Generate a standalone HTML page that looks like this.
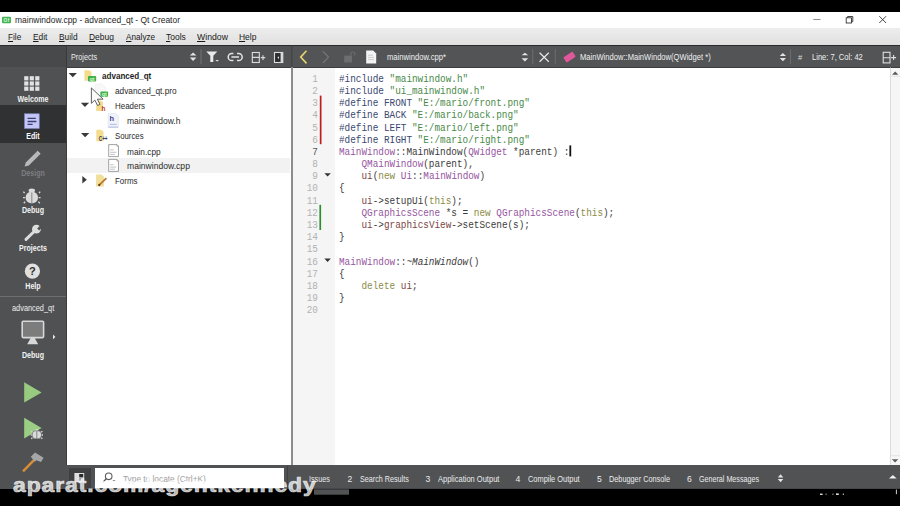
<!DOCTYPE html>
<html><head><meta charset="utf-8">
<style>
*{margin:0;padding:0;box-sizing:border-box}
html,body{width:900px;height:506px;overflow:hidden;background:#000;font-family:"Liberation Sans",sans-serif;position:relative}
.a{position:absolute}
.t{position:absolute;white-space:pre;line-height:1}
svg{position:absolute;overflow:visible}
#title{left:0;top:12px;width:900px;height:16px;background:#fff}
#menu{left:0;top:28px;width:900px;height:17px;background:linear-gradient(#ededed,#e0e0e0)}
#lefttb{left:0;top:45px;width:66px;height:22px;background:#47494b;border-top:1px solid #2a2a2a}
#projtb{left:66px;top:45px;width:226px;height:22px;background:#505254;border-top:1px solid #2a2a2a;border-left:1px solid #3a3a3a}
#edtb{left:292px;top:45px;width:608px;height:22px;background:#525456;border-top:1px solid #2a2a2a}
#modebar{left:0;top:67px;width:66px;height:422px;background:#4f5153}
#editsel{left:0;top:105px;width:66px;height:38px;background:#2f3133}
#modesep{left:0;top:296px;width:66px;height:1px;background:#6c6e70}
#tree{left:66px;top:67px;width:225px;height:398px;background:#fff;border-top:1px solid #3c3c3c;border-left:1px solid #3c3c3c}
#treesel{left:67px;top:158px;width:223px;height:15px;background:#f2f2f2}
#splitter{left:291px;top:67px;width:2px;height:398px;background:#8c8c8c}
#gutter{left:293px;top:67px;width:42px;height:398px;background:#f5f5f5;border-top:1px solid #3c3c3c}
#code{left:335px;top:67px;width:555px;height:398px;background:#fff;border-top:1px solid #3c3c3c}
#vscroll{left:890px;top:67px;width:10px;height:398px;background:#f6f6f6;border-left:1px solid #dcdcdc;border-top:1px solid #3c3c3c}
#status{left:66px;top:465px;width:834px;height:24.4px;background:#505254;border-bottom:1.4px solid #45474a}
#search{left:95px;top:468px;width:189px;height:20.4px;background:#fff}
#sbtn{left:69px;top:468px;width:22px;height:20px;background:#3e4042}
.code{position:absolute;left:339px;top:72.8px;font-family:"Liberation Mono",monospace;font-size:10.4px;line-height:12.18px;white-space:pre;color:#3c3c3c;transform:scaleX(0.9006);transform-origin:0 0}
.ln{position:absolute;left:293px;top:72.8px;width:25px;text-align:right;font-family:"Liberation Mono",monospace;font-size:10.4px;line-height:12.18px;white-space:pre;color:#b2b2b2;transform:scaleX(0.9006);transform-origin:100% 0}
.pp{color:#3a4870}
.str{color:#4a8a4a}
.ty{color:#9656a0}
.kw{color:#8c8c48}
.fd{color:#7c4646}
</style></head><body>
<div id="title" class="a"></div>
<div id="menu" class="a"></div>
<div id="lefttb" class="a"></div>
<div id="projtb" class="a"></div>
<div id="edtb" class="a"></div>
<div id="modebar" class="a"></div>
<div id="editsel" class="a"></div>
<div id="modesep" class="a"></div>
<div id="tree" class="a"></div>
<div id="treesel" class="a"></div>
<div id="splitter" class="a"></div>
<div id="gutter" class="a"></div>
<div id="code" class="a"></div>
<div id="vscroll" class="a"></div>
<div id="status" class="a"></div>
<div id="search" class="a"></div>
<div id="sbtn" class="a"></div>
<div class="ln">1
2
3
4
5
6
<span style="color:#555">7</span>
8
9
10
11
12
13
14
15
16
17
18
19
20</div>
<div class="code"><span class="pp">#include <span class="str">"mainwindow.h"</span></span>
<span class="pp">#include <span class="str">"ui_mainwindow.h"</span></span>
<span class="pp">#define FRONT <span class="str">"E:/mario/front.png"</span></span>
<span class="pp">#define BACK <span class="str">"E:/mario/back.png"</span></span>
<span class="pp">#define LEFT <span class="str">"E:/mario/left.png"</span></span>
<span class="pp">#define RIGHT <span class="str">"E:/mario/right.png"</span></span>
<span class="ty">MainWindow</span>::MainWindow(<span class="ty">QWidget</span> *parent) :
    <span class="ty">QMainWindow</span>(parent),
    <span class="fd">ui</span>(<span class="kw">new</span> <span class="ty">Ui</span>::<span class="ty">MainWindow</span>)
{
    <span class="fd">ui</span>-&gt;setupUi(<span class="kw">this</span>);
    <span class="ty">QGraphicsScene</span> *s = <span class="kw">new</span> <span class="ty">QGraphicsScene</span>(<span class="kw">this</span>);
    <span class="fd">ui</span>-&gt;<span class="fd">graphicsView</span>-&gt;setScene(s);
}

<span class="ty">MainWindow</span>::<i>~MainWindow</i>()
{
    <span class="kw">delete</span> <span class="fd">ui</span>;
}
</div>
<div class='t' id='t0' style="left:14.60px;top:16.27px;font-size:8.9px;font-weight:400;color:#1e1e1e;font-family:'Liberation Sans';;transform:scaleX(0.9529);transform-origin:0 0">mainwindow.cpp - advanced_qt - Qt Creator</div>
<div class='t' id='t1' style="left:8.40px;top:32.82px;font-size:9.0px;font-weight:400;color:#1a1a1a;font-family:'Liberation Sans';;transform:scaleX(0.9094);transform-origin:0 0"><u>F</u>ile</div>
<div class='t' id='t2' style="left:33.00px;top:32.82px;font-size:9.0px;font-weight:400;color:#1a1a1a;font-family:'Liberation Sans';;transform:scaleX(0.9281);transform-origin:0 0"><u>E</u>dit</div>
<div class='t' id='t3' style="left:59.00px;top:32.82px;font-size:9.0px;font-weight:400;color:#1a1a1a;font-family:'Liberation Sans';;transform:scaleX(0.9243);transform-origin:0 0"><u>B</u>uild</div>
<div class='t' id='t4' style="left:89.00px;top:32.82px;font-size:9.0px;font-weight:400;color:#1a1a1a;font-family:'Liberation Sans';;transform:scaleX(0.9423);transform-origin:0 0"><u>D</u>ebug</div>
<div class='t' id='t5' style="left:125.50px;top:32.82px;font-size:9.0px;font-weight:400;color:#1a1a1a;font-family:'Liberation Sans';;transform:scaleX(0.9085);transform-origin:0 0"><u>A</u>nalyze</div>
<div class='t' id='t6' style="left:165.80px;top:32.82px;font-size:9.0px;font-weight:400;color:#1a1a1a;font-family:'Liberation Sans';;transform:scaleX(0.9422);transform-origin:0 0"><u>T</u>ools</div>
<div class='t' id='t7' style="left:196.70px;top:32.82px;font-size:9.0px;font-weight:400;color:#1a1a1a;font-family:'Liberation Sans';;transform:scaleX(0.9652);transform-origin:0 0"><u>W</u>indow</div>
<div class='t' id='t8' style="left:239.30px;top:32.82px;font-size:9.0px;font-weight:400;color:#1a1a1a;font-family:'Liberation Sans';;transform:scaleX(0.9397);transform-origin:0 0"><u>H</u>elp</div>
<div class='t' id='t9' style="left:71.40px;top:53.01px;font-size:8.8px;font-weight:400;color:#ededed;font-family:'Liberation Sans';;transform:scaleX(0.8244);transform-origin:0 0">Projects</div>
<div class='t' id='t10' style="left:387.00px;top:52.91px;font-size:8.8px;font-weight:400;color:#f0f0f0;font-family:'Liberation Sans';;transform:scaleX(0.8678);transform-origin:0 0">mainwindow.cpp*</div>
<div class='t' id='t11' style="left:580.00px;top:52.91px;font-size:8.8px;font-weight:400;color:#f0f0f0;font-family:'Liberation Sans';;transform:scaleX(0.8624);transform-origin:0 0">MainWindow::MainWindow(QWidget *)</div>
<div class='t' id='t12' style="left:798.00px;top:53.55px;font-size:7.5px;font-weight:400;color:#dcdcdc;font-family:'Liberation Sans';">#</div>
<div class='t' id='t13' style="left:811.60px;top:52.91px;font-size:8.8px;font-weight:400;color:#f0f0f0;font-family:'Liberation Sans';;transform:scaleX(0.8583);transform-origin:0 0">Line: 7, Col: 42</div>
<div class='t' id='t14' style="left:0;width:66px;text-align:center;top:95.01px;font-size:8.6px;font-weight:700;color:#f4f4f4;font-family:'Liberation Sans';;transform:scaleX(0.8200);transform-origin:50% 0">Welcome</div>
<div class='t' id='t15' style="left:0;width:66px;text-align:center;top:131.71px;font-size:8.6px;font-weight:700;color:#ffffff;font-family:'Liberation Sans';;transform:scaleX(0.8200);transform-origin:50% 0">Edit</div>
<div class='t' id='t16' style="left:0;width:66px;text-align:center;top:169.41px;font-size:8.6px;font-weight:700;color:#7d7f81;font-family:'Liberation Sans';;transform:scaleX(0.8200);transform-origin:50% 0">Design</div>
<div class='t' id='t17' style="left:0;width:66px;text-align:center;top:206.41px;font-size:8.6px;font-weight:700;color:#f4f4f4;font-family:'Liberation Sans';;transform:scaleX(0.8200);transform-origin:50% 0">Debug</div>
<div class='t' id='t18' style="left:0;width:66px;text-align:center;top:243.81px;font-size:8.6px;font-weight:700;color:#f4f4f4;font-family:'Liberation Sans';;transform:scaleX(0.8200);transform-origin:50% 0">Projects</div>
<div class='t' id='t19' style="left:0;width:66px;text-align:center;top:281.51px;font-size:8.6px;font-weight:700;color:#f4f4f4;font-family:'Liberation Sans';;transform:scaleX(0.8200);transform-origin:50% 0">Help</div>
<div class='t' id='t20' style="left:0;width:66px;text-align:center;top:351.21px;font-size:8.6px;font-weight:700;color:#f4f4f4;font-family:'Liberation Sans';;transform:scaleX(0.8200);transform-origin:50% 0">Debug</div>
<div class='t' id='t21' style="left:11.80px;top:304.21px;font-size:8.6px;font-weight:400;color:#f0f0f0;font-family:'Liberation Sans';;transform:scaleX(0.8574);transform-origin:0 0">advanced_qt</div>
<div class='t' id='t22' style="left:102.30px;top:72.32px;font-size:9.2px;font-weight:700;color:#1e1e1e;font-family:'Liberation Sans';;transform:scaleX(0.8777);transform-origin:0 0">advanced_qt</div>
<div class='t' id='t23' style="left:114.50px;top:85.62px;font-size:9.4px;font-weight:400;color:#2a2a2a;font-family:'Liberation Sans';;transform:scaleX(0.8818);transform-origin:0 0">advanced_qt.pro</div>
<div class='t' id='t24' style="left:114.50px;top:101.22px;font-size:9.4px;font-weight:400;color:#2a2a2a;font-family:'Liberation Sans';;transform:scaleX(0.8466);transform-origin:0 0">Headers</div>
<div class='t' id='t25' style="left:126.70px;top:116.42px;font-size:9.4px;font-weight:400;color:#2a2a2a;font-family:'Liberation Sans';;transform:scaleX(0.9068);transform-origin:0 0">mainwindow.h</div>
<div class='t' id='t26' style="left:114.50px;top:131.42px;font-size:9.4px;font-weight:400;color:#2a2a2a;font-family:'Liberation Sans';;transform:scaleX(0.8312);transform-origin:0 0">Sources</div>
<div class='t' id='t27' style="left:126.70px;top:146.82px;font-size:9.4px;font-weight:400;color:#2a2a2a;font-family:'Liberation Sans';;transform:scaleX(0.8831);transform-origin:0 0">main.cpp</div>
<div class='t' id='t28' style="left:126.70px;top:161.02px;font-size:9.4px;font-weight:400;color:#2a2a2a;font-family:'Liberation Sans';;transform:scaleX(0.9143);transform-origin:0 0">mainwindow.cpp</div>
<div class='t' id='t29' style="left:114.50px;top:176.02px;font-size:9.4px;font-weight:400;color:#2a2a2a;font-family:'Liberation Sans';;transform:scaleX(0.8508);transform-origin:0 0">Forms</div>
<div class='t' id='t30' style="left:309.30px;top:474.71px;font-size:8.6px;font-weight:400;color:#ececec;font-family:'Liberation Sans';;transform:scaleX(0.8372);transform-origin:0 0">Issues</div>
<div class='t' id='t31' style="left:347.60px;top:474.71px;font-size:8.6px;font-weight:400;color:#ececec;font-family:'Liberation Sans';">2</div>
<div class='t' id='t32' style="left:359.60px;top:474.71px;font-size:8.6px;font-weight:400;color:#ececec;font-family:'Liberation Sans';;transform:scaleX(0.8373);transform-origin:0 0">Search Results</div>
<div class='t' id='t33' style="left:425.60px;top:474.71px;font-size:8.6px;font-weight:400;color:#ececec;font-family:'Liberation Sans';">3</div>
<div class='t' id='t34' style="left:437.60px;top:474.71px;font-size:8.6px;font-weight:400;color:#ececec;font-family:'Liberation Sans';;transform:scaleX(0.8742);transform-origin:0 0">Application Output</div>
<div class='t' id='t35' style="left:515.60px;top:474.71px;font-size:8.6px;font-weight:400;color:#ececec;font-family:'Liberation Sans';">4</div>
<div class='t' id='t36' style="left:528.40px;top:474.71px;font-size:8.6px;font-weight:400;color:#ececec;font-family:'Liberation Sans';;transform:scaleX(0.8641);transform-origin:0 0">Compile Output</div>
<div class='t' id='t37' style="left:597.00px;top:474.71px;font-size:8.6px;font-weight:400;color:#ececec;font-family:'Liberation Sans';">5</div>
<div class='t' id='t38' style="left:609.00px;top:474.71px;font-size:8.6px;font-weight:400;color:#ececec;font-family:'Liberation Sans';;transform:scaleX(0.8511);transform-origin:0 0">Debugger Console</div>
<div class='t' id='t39' style="left:687.00px;top:474.71px;font-size:8.6px;font-weight:400;color:#ececec;font-family:'Liberation Sans';">6</div>
<div class='t' id='t40' style="left:699.00px;top:474.71px;font-size:8.6px;font-weight:400;color:#ececec;font-family:'Liberation Sans';;transform:scaleX(0.8317);transform-origin:0 0">General Messages</div>
<div class='t' id='t41' style="left:122.70px;top:474.61px;font-size:8.6px;font-weight:400;color:#a0a0a0;font-family:'Liberation Sans';;transform:scaleX(0.9658);transform-origin:0 0">Type to locate (Ctrl+K)</div>
<svg width="900" height="506" viewBox="0 0 900 506" style="left:0;top:0">
<!-- title bar qt icon -->
<rect x="2" y="16.8" width="9" height="6.4" rx="1" fill="#46b458"/>
<path d="M4.2 18.6h2.6v2.8h-2.6z" fill="none" stroke="#c8f5c8" stroke-width="0.9"/>
<path d="M8.6 18.2v3.6M7.8 19.4h1.8" stroke="#c8f5c8" stroke-width="0.8"/>
<!-- window controls -->
<path d="M813.3 19.5h7.2" stroke="#808080" stroke-width="0.9"/>
<rect x="846.2" y="17.8" width="5.3" height="5.2" fill="none" stroke="#333" stroke-width="0.9"/>
<path d="M847.6 17.8v-1.3h5.2v5.2h-1.3" fill="none" stroke="#333" stroke-width="0.9"/>
<path d="M879.3 16.2l6.8 6.8M886.1 16.2l-6.8 6.8" stroke="#333" stroke-width="0.9"/>
<!-- projects toolbar -->
<path d="M189.8 55.4l3.3-2.9 3.3 2.9zM189.8 57.6l3.3 3.3 3.3-3.3z" fill="#e4e4e4"/>
<path d="M201 49.3v15" stroke="#6c6e70" stroke-width="1.2"/>
<path d="M206.3 51.6h11l-4 4.2v6.3h-3v-6.3z" fill="#eaeaea"/>
<path d="M215.3 60h3.7l-1.85 1.6z" fill="#eaeaea"/>
<path d="M233.4 53.4h-1.6a3.6 3.6 0 0 0 0 7.2h1.6M237 53.4h1.6a3.6 3.6 0 0 1 0 7.2h-1.6M231.4 57h7.6" fill="none" stroke="#e4e4e4" stroke-width="1.5"/>
<rect x="252.3" y="52.5" width="7" height="10" fill="none" stroke="#dcdcdc" stroke-width="1.1"/>
<path d="M252.3 57.4h7M260.8 57.6h4.4M263 55.3v4.6" stroke="#dcdcdc" stroke-width="1.1"/>
<rect x="274.5" y="52.5" width="8.3" height="10" fill="#2c2e30" stroke="#dcdcdc" stroke-width="1.1"/>
<rect x="280.6" y="52.5" width="2.2" height="10" fill="#dcdcdc"/>
<path d="M279 56.2v2.8l-1.6-1.4z" fill="#e4e4e4"/>
<path d="M291.8 45.5v21.5" stroke="#434547" stroke-width="1.4"/>
<!-- editor toolbar -->
<path d="M306.5 50.8l-5.8 6.3 5.8 6.3" fill="none" stroke="#e6d56a" stroke-width="1.6"/>
<path d="M322.9 51.2l5.6 5.9-5.6 5.9" fill="none" stroke="#737577" stroke-width="1.3"/>
<rect x="344.2" y="55.6" width="7.8" height="6.8" fill="#6c6e70"/>
<path d="M350.8 55.6v-1.6a2 2 0 0 1 4 0v1.4" fill="none" stroke="#6c6e70" stroke-width="1.2"/>
<path d="M366.2 50.6h7l3 3v9.8h-10z" fill="#f4f4f4"/>
<path d="M368 55.2h5M368 57.4h6M368 59.6h6" stroke="#b0b0b0" stroke-width="0.6"/>
<path d="M521.6 55.3l3.3-2.6 3.3 2.6zM521.6 58.2l3.3 3.2 3.3-3.2z" fill="#e4e4e4"/>
<path d="M532.7 49.2v15M555.3 49.2v15" stroke="#6a6c6e" stroke-width="1.1"/>
<path d="M539.6 52.8l9.2 9M548.8 52.8l-9.2 9" stroke="#e8e8e8" stroke-width="1.2"/>
<rect x="564" y="54" width="11" height="6.2" rx="1" fill="#e0589a" transform="rotate(-33 569.5 57.1)"/>
<path d="M779.8 55.9l3.1-3 3.1 3zM779.8 57.9l3.1 3.4 3.1-3.4z" fill="#e4e4e4"/>
<path d="M790.5 49.2v15" stroke="#6a6c6e" stroke-width="1.1"/>
<rect x="883.2" y="52.3" width="6.8" height="10.6" fill="none" stroke="#e0e0e0" stroke-width="1.1"/>
<path d="M883.2 57.7h6.8M891.1 57.6h5M893.6 55v5" stroke="#e0e0e0" stroke-width="1.1"/>

<!-- mode bar icons -->
<g fill="#e2e2e2">
<rect x="24.2" y="76.2" width="4.2" height="4.2"/><rect x="29.7" y="76.2" width="4.2" height="4.2"/><rect x="35.2" y="76.2" width="4.2" height="4.2"/>
<rect x="24.2" y="81.4" width="4.2" height="4.2"/><rect x="29.7" y="81.4" width="4.2" height="4.2"/><rect x="35.2" y="81.4" width="4.2" height="4.2"/>
<rect x="24.2" y="86.6" width="4.2" height="4.2"/><rect x="29.7" y="86.6" width="4.2" height="4.2"/><rect x="35.2" y="86.6" width="4.2" height="4.2"/>
</g>
<rect x="24.6" y="113.8" width="14.6" height="14.6" fill="#c3c6f7" stroke="#8e92d0" stroke-width="0.6"/>
<path d="M27.6 118.4h8.2M27.6 121.5h8.8M27.6 124.3h5" stroke="#3b3f70" stroke-width="1.3"/>
<path d="M24.6 166.6l1.2-4.2 10.6-10.4 3 3-10.6 10.4z" fill="#b9b9b9"/>
<path d="M36.4 152l1.2-1.2 3 3-1.2 1.2z" fill="#c4c4c4"/>
<path d="M24.6 193.2l-1.2-1.6M39 193.2l1.2-1.6M25 197.6h-2M38.6 197.6h2M25.2 201.6l-1.4 1.6M38.4 201.6l1.4 1.6" stroke="#d4d4d4" stroke-width="1.4"/>
<ellipse cx="31.8" cy="190.4" rx="3.2" ry="1.9" fill="#dadada"/>
<rect x="25.6" y="191.8" width="12.4" height="11.4" rx="5.4" fill="#dadada"/>
<path d="M31.8 192.4v10.8" stroke="#8c8c8c" stroke-width="1.1"/>
<path d="M26 239.4l8.4-8.2" stroke="#dcdcdc" stroke-width="3" stroke-linecap="round"/>
<circle cx="36.4" cy="229.2" r="4.4" fill="#dcdcdc"/>
<path d="M37.2 228.4l4.6-4.6 2 2-4.6 4.6z" fill="#4f5153"/>
<circle cx="32.4" cy="271.2" r="7.6" fill="#e0e0e0"/>
<text x="32.4" y="275.4" font-family="Liberation Sans" font-weight="bold" font-size="11" text-anchor="middle" fill="#2e2e2e">?</text>
<rect x="22.2" y="321.2" width="21.4" height="16.4" rx="1" fill="#7c7c7c" stroke="#d8d8d8" stroke-width="1.6"/>
<path d="M27.2 344.2l3.6-6.4h3.8l3.6 6.4z" fill="#d8d8d8"/>
<path d="M53 334.6v4.6l2.4-2.3z" fill="#e8e8e8"/>
<path d="M24.2 382.2v20.4l17.4-10.2z" fill="#98cb80"/>
<path d="M24.2 417.8v20.6l17.4-10.3z" fill="#9ccd84"/>
<path d="M32.4 432.2l-1.2-1M41.2 432.2l1.2-1M32.2 435h-1.6M41.4 435h1.6M32.4 437.8l-1.2 1M41.2 437.8l1.2 1" stroke="#d8d8d8" stroke-width="1.3"/>
<ellipse cx="36.8" cy="430" rx="1.6" ry="1.1" fill="#d8d8d8"/>
<rect x="32.2" y="430.8" width="9.2" height="8" rx="3.4" fill="#dadada" stroke="#4f5153" stroke-width="0.5"/>
<path d="M36.8 431v7.8" stroke="#7a7a7a" stroke-width="0.9"/>
<path d="M23 471.4l12.4-12.8" stroke="#d98d35" stroke-width="2.4"/>
<path d="M30.8 456.8l4.2-4.2 8.6 5.2-2.6 4.2-4.6-1.8-1.6 1.6z" fill="#a6a6a6"/>

<!-- tree -->
<path d="M68.6 73.1h8.3l-4.15 4.2z" fill="#3a3a3a"/>
<path d="M80.8 102.8h8.3l-4.15 4.1z" fill="#3a3a3a"/>
<path d="M81 133.1h8.3l-4.15 4.2z" fill="#3a3a3a"/>
<path d="M82.3 176l4.5 3.8-4.5 3.8z" fill="#3a3a3a"/>
<path d="M84.4 70.2h4.6l2.4 1.6v9h-7z" fill="#f3dc8e"/>
<rect x="88" y="76" width="8.2" height="5.4" rx="1" fill="#3fae46"/>
<text x="92.1" y="80.6" font-family="Liberation Sans" font-size="5.4" font-weight="bold" text-anchor="middle" fill="#d8f8d8">qt</text>
<path d="M95.2 84h6.4l4 3.2v7.4h-10.4z" fill="#f8f8f8" stroke="#e8e8e8" stroke-width="0.5"/>
<rect x="100.4" y="91.4" width="7.7" height="5.4" rx="1" fill="#3fae46"/>
<text x="104.25" y="95.9" font-family="Liberation Sans" font-size="5.4" font-weight="bold" text-anchor="middle" fill="#d8f8d8">qt</text>
<path d="M96.2 100.4h4.4l2.4 1.6v9h-6.8z" fill="#f3dc8e"/>
<text x="103.4" y="110.6" font-family="Liberation Sans" font-size="6.4" font-weight="bold" text-anchor="middle" fill="#c0392b">h</text>
<path d="M108.2 113.6h7.6l2.6 2.6v11.2h-10.2z" fill="#f0f3fb" stroke="#d4dbee" stroke-width="0.5"/>
<text x="111.8" y="120.9" font-family="Liberation Sans" font-size="7.4" font-weight="bold" text-anchor="middle" fill="#3a3f86">h</text>
<path d="M109.8 124.4h7M108.4 127.1h9.6" stroke="#97a6d6" stroke-width="0.7"/>
<path d="M96.3 129.8h4.6l2.6 1.6v9.8h-7.2z" fill="#f3dc8e"/>
<text x="98.8" y="140.9" font-family="Liberation Sans" font-size="6.4" font-weight="bold" fill="#2c3a5e" textLength="8.8" lengthAdjust="spacingAndGlyphs">C++</text>
<path d="M108.7 144.6h8.2l1.6 1.6v10.4h-9.8z" fill="#fff" stroke="#8a8a8a" stroke-width="0.8"/>
<path d="M116.9 144.6v1.6h1.6" fill="none" stroke="#8a8a8a" stroke-width="0.6"/>
<path d="M110.2 149.9h3.4M110.2 152.3h6M110.2 154.4h4.6" stroke="#a8a8a8" stroke-width="0.7"/>
<path d="M108.7 159.4h8.2l1.6 1.6v10.4h-9.8z" fill="#fff" stroke="#8a8a8a" stroke-width="0.8"/>
<path d="M116.9 159.4v1.6h1.6" fill="none" stroke="#8a8a8a" stroke-width="0.6"/>
<path d="M110.2 164.7h3.4M110.2 167.1h6M110.2 169.2h4.6" stroke="#a8a8a8" stroke-width="0.7"/>
<path d="M96.1 174.6h5.2l2.6 1.8v10h-7.8z" fill="#f1de98"/>
<path d="M98.6 185.6l7.8-7.4" stroke="#b5782e" stroke-width="1.8"/>
<path d="M98.6 185.6l1.2-1.2" stroke="#4a3a20" stroke-width="1.8"/>
<!-- mouse cursor -->
<path d="M91.4 87.9v15.4l3.4-3.2 2.8 5.4 2.4-1.1-2.6-5.2h5.7z" fill="#fbfbfb" stroke="#505050" stroke-width="0.9" stroke-linejoin="round"/>
<!-- gutter markers -->
<rect x="319.8" y="95.6" width="1.7" height="48.6" fill="#c01c1c"/>
<rect x="319.4" y="204.8" width="1.7" height="25.2" fill="#2f8f2f"/>
<path d="M324.4 173.2h6.4l-3.2 3.4z" fill="#333"/>
<path d="M324.4 258.5h6.4l-3.2 3.4z" fill="#333"/>
<rect x="569.4" y="145.4" width="1.8" height="11" fill="#111"/>
<!-- scrollbar arrows -->
<path d="M892 74.8l3.2-3.4 3.2 3.4z" fill="#5a5a5a"/>
<path d="M890 76.3h10" stroke="#dedede" stroke-width="0.8"/>
<path d="M891.8 459.3h6.5l-3.25 3.2z" fill="#5a5a5a"/>
<path d="M890 455.7h10" stroke="#dedede" stroke-width="0.8"/>
<!-- status bar -->
<rect x="74.4" y="473" width="9.8" height="9.4" fill="#e0e0e0"/>
<rect x="79.2" y="474" width="4" height="3.2" fill="#2a2a2a"/>
<rect x="79.2" y="477.2" width="4" height="4.2" fill="#9a9a9a"/>
<circle cx="108.7" cy="476.3" r="3.3" fill="none" stroke="#5a5a5a" stroke-width="1.1"/>
<path d="M106.3 478.8l-3.6 3.6" stroke="#5a5a5a" stroke-width="1.3"/>
<path d="M112.3 480.2h3.4l-1.7 1.3z" fill="#6a6a6a"/>
<path d="M777.8 477.6l2.75-3.4 2.75 3.4zM777.8 479l2.75 3.2 2.75-3.2z" fill="#e4e4e4"/>
<path d="M889 478.6l3.85-3.6 3.85 3.6z" fill="#f0f0f0"/>

<rect x="314" y="489.3" width="35" height="5.4" fill="#505254"/>
<path d="M896.4 489.6v4.6" stroke="#cfcfcf" stroke-width="1"/>
<path d="M287.4 466v23" stroke="#3e4042" stroke-width="1"/>
<g fill="#dcdcdc"><rect x="820" y="493.6" width="2.6" height="1.4"/><rect x="825.4" y="493.6" width="1.4" height="1.2" fill="#888"/><rect x="832.2" y="493.6" width="1.4" height="1.2" fill="#888"/><rect x="836" y="493.4" width="2.8" height="1.6"/><rect x="842.8" y="493.6" width="1.2" height="1.2"/></g>
</svg>

<div class="t" style="left:12.6px;top:475.4px;font-size:20px;font-weight:700;color:rgba(255,255,255,0.72);-webkit-text-stroke:0.7px rgba(255,255,255,0.72);letter-spacing:0.8px;transform:scaleX(1.145);transform-origin:0 0">aparat.com/agentkennedy</div>
</body></html>
